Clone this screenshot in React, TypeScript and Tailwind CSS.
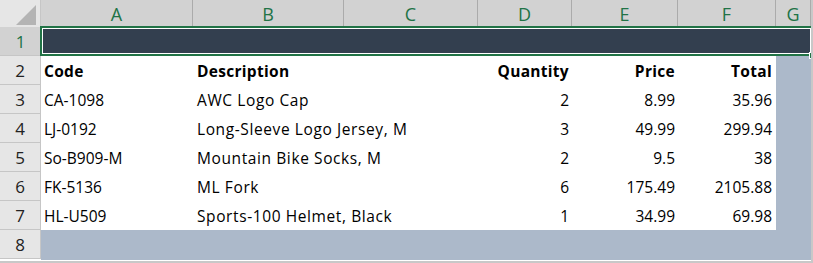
import React from 'react'

const cols = ['A', 'B', 'C', 'D', 'E', 'F', 'G']

const rows = [
  ['CA-1098', 'AWC Logo Cap', '2', '8.99', '35.96'],
  ['LJ-0192', 'Long-Sleeve Logo Jersey, M', '3', '49.99', '299.94'],
  ['So-B909-M', 'Mountain Bike Socks, M', '2', '9.5', '38'],
  ['FK-5136', 'ML Fork', '6', '175.49', '2105.88'],
  ['HL-U509', 'Sports-100 Helmet, Black', '1', '34.99', '69.98'],
]

const grid = 'grid grid-cols-[41px_152px_151px_134px_94px_106px_98px_35px]'

function RowHead({ n, active }: { n: number; active?: boolean }) {
  return (
    <div
      className={
        'flex h-[29px] items-center justify-center border-b pt-px text-[17px] font-normal tracking-normal ' +
        (active
          ? 'border-b-[#c6c6c6] bg-[#d2d2d2] text-[#217346]'
          : 'border-r border-[#c6c6c6] bg-[#e6e6e6] text-[#222]')
      }
    >
      {n}
    </div>
  )
}

export default function App() {
  return (
    <div
      className="h-[263px] w-[813px] overflow-hidden border-r-2 border-b-2 border-[#c8c8c8] bg-white text-black"
      style={{ fontFamily: '"Open Sans", sans-serif' }}
    >
      {/* column headers */}
      <div className={grid + ' h-[27px]'}>
        <div className="border-r border-[#c6c6c6] bg-[#e6e6e6] pl-[16px] pt-[5px]">
          <svg width="20" height="20" viewBox="0 0 20 20">
            <polygon points="20,0 20,20 0,20" fill="#b4b4b4" />
          </svg>
        </div>
        {cols.map((c) => (
          <div
            key={c}
            className="flex items-center justify-center border-r border-[#ababab] bg-[#d2d2d2] pt-px text-[18px] text-[#217346]"
          >
            {c}
          </div>
        ))}
      </div>

      {/* row 1 */}
      <div className={grid}>
        <RowHead n={1} active />
        <div className="relative col-span-7 h-[29px] bg-[#333f4f]">
          <div className="absolute -left-px -right-[2px] -top-px bottom-0 border-2 border-[#217346]">
            <div className="h-full w-full border border-white" />
          </div>
          <div className="absolute -right-[5px] -bottom-[3px] h-[7px] w-[7px] border border-white bg-[#217346]" />
        </div>
      </div>

      {/* row 2 - headers */}
      <div className={grid + ' text-[15.5px] font-bold tracking-[0.3px]'}>
        <RowHead n={2} />
        <div className="flex items-center pl-[3px] pt-[2px]">Code</div>
        <div className="flex items-center pl-[4px] pt-[2px]">Description</div>
        <div />
        <div className="flex items-center justify-end pr-[3px] pt-[2px]">Quantity</div>
        <div className="flex items-center justify-end pr-[3px] pt-[2px]">Price</div>
        <div className="flex items-center justify-end pr-[4px] pt-[2px]">Total</div>
        <div className="bg-[#acb9ca]" />
      </div>

      {rows.map((r, i) => (
        <div key={r[0]} className={grid + ' text-[15.5px]'}>
          <RowHead n={i + 3} />
          <div className="flex items-center pl-[3px] pt-[2px]">{r[0]}</div>
          <div className="col-span-2 flex items-center whitespace-nowrap pl-[4px] pt-[2px] tracking-[0.6px]">
            {r[1]}
          </div>
          <div className="flex items-center justify-end pr-[3px] pt-[2px]">{r[2]}</div>
          <div className="flex items-center justify-end pr-[3px] pt-[2px]">{r[3]}</div>
          <div className="flex items-center justify-end pr-[4px] pt-[2px]">{r[4]}</div>
          <div className="bg-[#acb9ca]" />
        </div>
      ))}

      {/* row 8 */}
      <div className={grid}>
        <RowHead n={8} />
        <div className="col-span-7 h-[30px] bg-[#acb9ca]" />
      </div>
    </div>
  )
}
